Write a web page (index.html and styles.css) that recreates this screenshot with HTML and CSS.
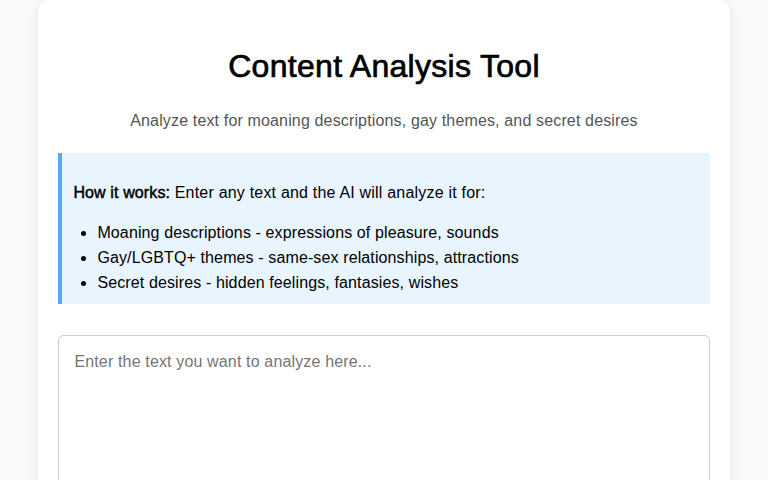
FILE: index.html
```html
<!DOCTYPE html>
<html lang="en">
<head>
<meta charset="utf-8">
<title>Content Analysis Tool</title>
<link rel="stylesheet" href="styles.css">
</head>
<body>
<div class="card">
  <h1 class="title">Content Analysis Tool</h1>
  <p class="subtitle">Analyze text for moaning descriptions, gay themes, and secret desires</p>
  <div class="info">
    <p class="info-lead"><strong>How it works:</strong> Enter any text and the AI will analyze it for:</p>
    <ul class="info-list">
      <li>Moaning descriptions - expressions of pleasure, sounds</li>
      <li>Gay/LGBTQ+ themes - same-sex relationships, attractions</li>
      <li>Secret desires - hidden feelings, fantasies, wishes</li>
    </ul>
  </div>
  <textarea class="input" placeholder="Enter the text you want to analyze here..."></textarea>
</div>
</body>
</html>
```
FILE: styles.css
```css
html, body {
  margin: 0;
  padding: 0;
  background: #fafafa;
  font-family: "Liberation Sans", Arial, sans-serif;
  color: #000;
}

.card {
  width: 90%;
  margin: 0 auto;
  box-sizing: border-box;
  background: #fff;
  border-radius: 12px;
  box-shadow: 0 2px 12px rgba(0, 0, 0, 0.1);
  padding: 20px 20px 40px;
  min-height: 600px;
}

.title {
  margin: 26px 0 0;
  font-size: 32px;
  line-height: 40px;
  font-weight: normal;
  letter-spacing: 0.3px;
  -webkit-text-stroke: 0.7px #000;
  text-align: center;
  color: #000;
}

.subtitle {
  margin: 25px 0 22px;
  font-size: 16px;
  line-height: 20px;
  letter-spacing: 0.15px;
  text-align: center;
  color: #555;
}

.info {
  background: #e8f5fe;
  border-left: 4px solid #55a8f2;
  padding: 15px 15px 9px 11px;
  font-size: 16px;
  line-height: 25px;
  letter-spacing: 0.12px;
}

.info-lead {
  margin: 12px 0 0;
  letter-spacing: 0.2px;
}

.info-lead strong {
  font-weight: normal;
  letter-spacing: 0.12px;
  -webkit-text-stroke: 0.45px #000;
}

.info-list {
  margin: 15px 0 0;
  padding-left: 24px;
}

.input {
  display: block;
  margin-top: 31px;
  width: 100%;
  box-sizing: border-box;
  height: 200px;
  border: 1px solid #ccc;
  border-radius: 6px;
  padding: 17px 15px 15px;
  font-family: "Liberation Sans", Arial, sans-serif;
  font-size: 16px;
  letter-spacing: 0.15px;
  resize: vertical;
}

.input::placeholder {
  color: #757575;
}
```
